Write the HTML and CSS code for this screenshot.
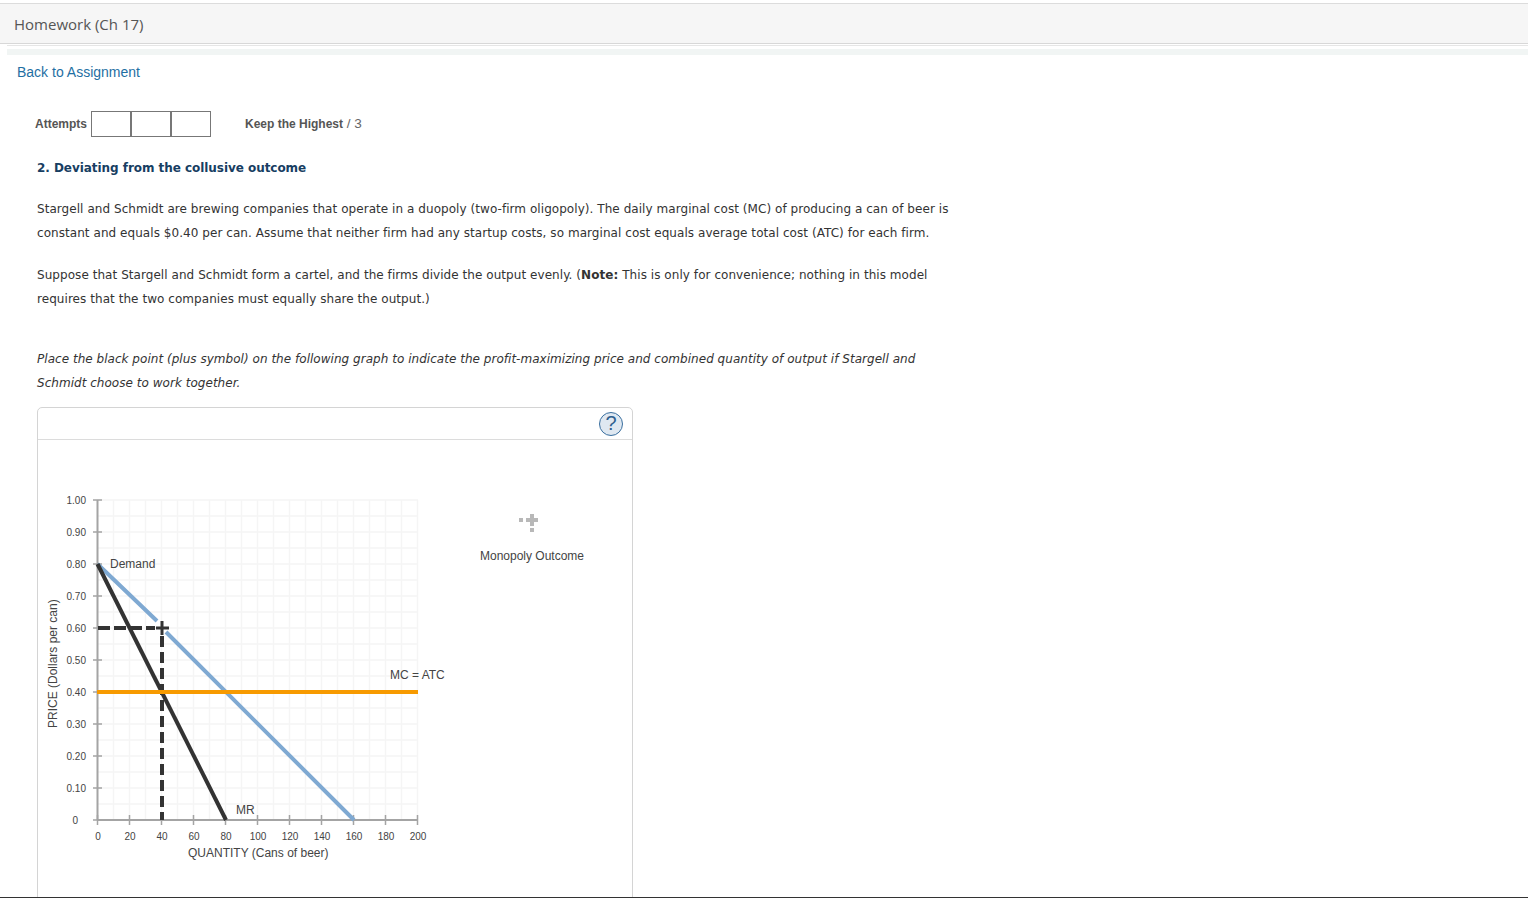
FILE: index.html
```html
<!DOCTYPE html>
<html lang="en">
<head>
<meta charset="utf-8">
<title>Homework (Ch 17)</title>
<link rel="stylesheet" href="styles.css">
</head>
<body>
<div class="viewport">
  <header class="topbar">Homework (Ch 17)</header>
  <div class="rule"></div>
  <div class="strip"></div>
  <a class="back" href="#">Back to Assignment</a>
  <div class="attempts">
    <span class="attempts-label">Attempts</span>
    <span class="boxes"><i></i><i></i><i></i></span>
    <span class="keep"><b>Keep the Highest</b> / 3</span>
  </div>
  <main class="question">
    <h2>2. Deviating from the collusive outcome</h2>
    <p class="para">Stargell and Schmidt are brewing companies that operate in a duopoly (two-firm oligopoly). The daily marginal cost (MC) of producing a can of beer is constant and equals $0.40 per can. Assume that neither firm had any startup costs, so marginal cost equals average total cost (ATC) for each firm.</p>
    <p class="para para-second">Suppose that Stargell and Schmidt form a cartel, and the firms divide the output evenly. (<b>Note:</b> This is only for convenience; nothing in this model requires that the two companies must equally share the output.)</p>
    <p class="para para-task"><em>Place the black point (plus symbol) on the following graph to indicate the profit-maximizing price and combined quantity of output if Stargell and Schmidt choose to work together.</em></p>
    <section class="panel">
      <div class="panel-head"><span class="help">?</span></div>
      <svg class="graph" width="594" height="460" viewBox="38 440 594 460" xmlns="http://www.w3.org/2000/svg">
        <g class="grid">
          <path d="M113.5 500V820M129.5 500V820M145.5 500V820M161.5 500V820M177.5 500V820M193.5 500V820M209.5 500V820M225.5 500V820M241.5 500V820M257.5 500V820M273.5 500V820M289.5 500V820M305.5 500V820M321.5 500V820M337.5 500V820M353.5 500V820M369.5 500V820M385.5 500V820M401.5 500V820M417.5 500V820"/>
          <path d="M97 500H418M97 516H418M97 532H418M97 548H418M97 564H418M97 580H418M97 596H418M97 612H418M97 628H418M97 644H418M97 660H418M97 676H418M97 692H418M97 708H418M97 724H418M97 740H418M97 756H418M97 772H418M97 788H418M97 804H418"/>
        </g>
        <g class="axis">
          <path class="axis-main" d="M97.500 500V820M97 820H418"/>
          <path d="M93 500H102M93 532H102M93 564H102M93 596H102M93 628H102M93 660H102M93 692H102M93 724H102M93 756H102M93 788H102M93 820H102"/>
          <path d="M97.500 815V825M129.500 815V825M161.500 815V825M193.500 815V825M225.500 815V825M257.500 815V825M289.500 815V825M321.500 815V825M353.500 815V825M385.500 815V825M417.500 815V825"/>
        </g>
        <path class="demand" d="M97.500 564L157 621M166 632L354 820"/>
        <path class="mr" d="M97.500 564L226 820"/>
        <path class="dash" d="M98 628H155"/>
        <path class="dash dash-v" d="M162 636V820"/>
        <path class="plus" d="M156 628H169M162 621V635"/>
        <path class="mc" d="M97 692H418"/>
        <g class="ticks-y">
          <text x="86" y="503.500">1.00</text><text x="86" y="535.500">0.90</text><text x="86" y="567.500">0.80</text><text x="86" y="599.500">0.70</text><text x="86" y="631.500">0.60</text><text x="86" y="663.500">0.50</text><text x="86" y="695.500">0.40</text><text x="86" y="727.500">0.30</text><text x="86" y="759.500">0.20</text><text x="86" y="791.500">0.10</text><text x="78" y="823.500">0</text>
        </g>
        <g class="ticks-x">
          <text x="98" y="840">0</text><text x="130" y="840">20</text><text x="162" y="840">40</text><text x="194" y="840">60</text><text x="226" y="840">80</text><text x="258" y="840">100</text><text x="290" y="840">120</text><text x="322" y="840">140</text><text x="354" y="840">160</text><text x="386" y="840">180</text><text x="418" y="840">200</text>
        </g>
        <text class="label" x="110" y="568">Demand</text>
        <text class="label" x="390" y="679">MC = ATC</text>
        <text class="label" x="236" y="814">MR</text>
        <text class="label" x="188" y="857">QUANTITY (Cans of beer)</text>
        <text class="label" transform="translate(57 728) rotate(-90)" x="0" y="0">PRICE (Dollars per can)</text>
        <path class="legend-plus" d="M526 520H538M532 514V526M519 520H523M532 528V532"/>
        <text class="label label-mid" x="532" y="560">Monopoly Outcome</text>
      </svg>
    </section>
  </main>
  <div class="bottom-edge"></div>
</div>
</body>
</html>
```
FILE: styles.css
```css
* { box-sizing: border-box; }
html, body { margin: 0; padding: 0; background: #fff; }
.viewport { height: 898px; overflow: hidden; display: flex; flex-direction: column; position: relative; padding-top: 3px; }
.topbar { height: 41px; flex: none; background: #f6f6f6; border-top: 1px solid #dcdcdc; border-bottom: 1px solid #d8d8d8; padding: 0 14px; font: 15px/40px "Open Sans", sans-serif; color: #555; }
.rule { height: 1px; flex: none; margin: 1px 0 0 7px; background: #e6e6e6; }
.strip { height: 6px; flex: none; margin: 3px 0 0 7px; background: #f1f5f4; }
.back { flex: none; align-self: flex-start; margin: 8px 0 0 17px; font: 14px/18px "Liberation Sans", Arial, sans-serif; color: #1f6fa3; text-decoration: none; }
.attempts { flex: none; display: flex; align-items: center; margin: 30px 0 0 35px; height: 26px; font: 12px "Liberation Sans", Arial, sans-serif; color: #555; }
.attempts-label { font-weight: bold; width: 56px; }
.boxes { display: flex; height: 26px; }
.boxes i { display: block; width: 40px; height: 26px; border: 1px solid #777; }
.keep { margin-left: 34px; padding-bottom: 2px; font-size: 13.500px; color: #666; }
.keep b { font-weight: bold; font-size: 12px; color: #555; }
.question { flex: none; margin-left: 37px; width: 920px; font: 12px/24px "DejaVu Sans", Verdana, sans-serif; color: #333; }
h2 { margin: 19px 0 0; font: bold 12px/24px "DejaVu Sans", Verdana, sans-serif; letter-spacing: -0.05px; color: #173e62; }
.para { margin: 17px 0 0; letter-spacing: 0.055px; }
.para-task { margin-top: 36px; letter-spacing: 0.03px; }
.para-second { margin-top: 18px; }
.para b { font-weight: bold; }
.panel { margin-top: 12px; width: 596px; height: 600px; border: 1px solid #d4d4d4; border-radius: 5px 5px 0 0; }
.panel-head { height: 32px; border-bottom: 1px solid #dcdcdc; display: flex; justify-content: flex-end; align-items: center; padding-right: 9px; }
.help { width: 24px; height: 24px; border-radius: 50%; border: 1.500px solid #3a6f9f; background: #dfe8f1; color: #2f5f8f; font: 20px/21px "Liberation Sans", Arial, sans-serif; text-align: center; }
.graph { display: block; }
.grid path { fill: none; stroke: #f5f5f5; stroke-width: 1.500; }
.axis path { fill: none; stroke: #a4a4a4; stroke-width: 1.500; }
.axis .axis-main { stroke-width: 2; }
.demand { fill: none; stroke: #7fa9d2; stroke-width: 4; }
.mr { fill: none; stroke: #333; stroke-width: 4; }
.mc { fill: none; stroke: #f79a00; stroke-width: 4; }
.dash { fill: none; stroke: #333; stroke-width: 4; stroke-dasharray: 12 4; }
.dash-v { stroke-dasharray: 11 5; }
.plus { fill: none; stroke: #333; stroke-width: 3; }
.legend-plus { fill: none; stroke: #b8b8b8; stroke-width: 4; }
.ticks-y text, .ticks-x text, .label { font-family: "Liberation Sans", Arial, sans-serif; fill: #444; }
.ticks-y text { font-size: 10px; text-anchor: end; }
.ticks-x text { font-size: 10px; text-anchor: middle; }
.label { font-size: 12px; }
.label-mid { text-anchor: middle; }
.bottom-edge { position: absolute; left: 0; right: 0; bottom: 0; height: 1px; background: #333; }
```
